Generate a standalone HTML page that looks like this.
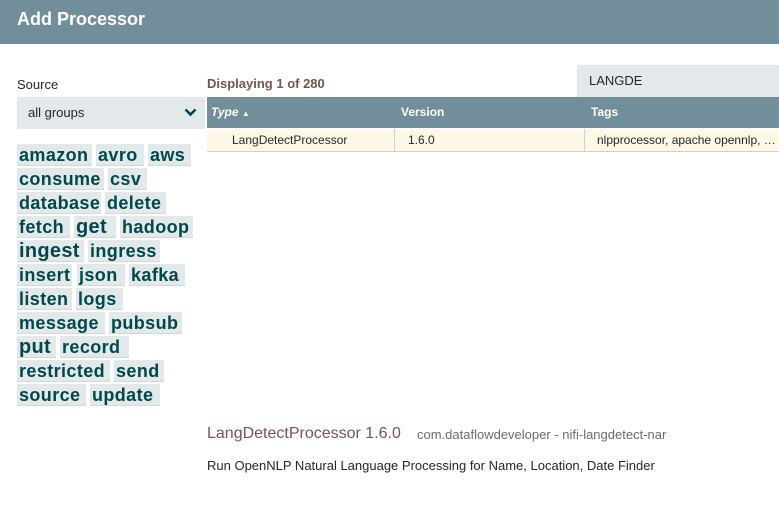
<!DOCTYPE html>
<html><head><style>
*{margin:0;padding:0;box-sizing:border-box}
body{width:779px;height:508px;background:#fff;font-family:"Liberation Sans",sans-serif;position:relative;overflow:hidden}
.a{position:absolute;white-space:nowrap}
.hdr{left:0;top:0;width:779px;height:44px;background:#728e9b;color:#fff;font-weight:bold;font-size:18px;padding:9px 0 0 17px}
.t{position:absolute;background:#e3e8eb;color:#004849;font-weight:bold;font-size:18px;height:22px;line-height:22px;padding:0 0 0 2px;letter-spacing:0.4px;border-bottom:1px solid #d2d9dc;overflow:hidden}
.b{font-size:20px;letter-spacing:0.3px}
.th{background:#728e9b;color:#fff;font-weight:bold;font-size:12px;height:31px;line-height:31px;top:97px}
.td{background:#fff8e6;font-size:12px;color:#262626;height:23px;line-height:22px;top:129px;border-bottom:1px solid #c7d2d7}
</style></head><body>
<div class="a hdr">Add Processor</div>
<div class="a" style="left:17px;top:77px;font-size:13px;color:#262626">Source</div>
<div class="a" style="left:17px;top:97px;width:188px;height:32px;background:#e3e8eb;font-size:13px;color:#262626;padding:8px 0 0 11px">all groups
<svg style="position:absolute;right:8px;top:11px" width="13" height="9" viewBox="0 0 13 9"><path d="M1.5 1.5 L6.5 6.5 L11.5 1.5" stroke="#004849" stroke-width="2.6" fill="none"/></svg></div>
<div class="a" style="left:207px;top:76px;font-size:13px;font-weight:bold;color:#775351">Displaying 1 of 280</div>
<div class="a" style="left:577px;top:65px;width:202px;height:32px;background:#e3e8eb;font-size:13px;color:#262626;padding:8px 0 0 12px">LANGDE</div>
<div class="a th" style="left:207px;width:188px;padding-left:4px;font-style:italic">Type <span style="font-size:8px;font-style:normal">▲</span></div>
<div class="a th" style="left:395px;width:190px;padding-left:6px">Version</div>
<div class="a th" style="left:585px;width:194px;padding-left:6px">Tags</div>
<div class="a td" style="left:207px;width:188px;padding-left:25px;border-right:1px solid #c7d2d7">LangDetectProcessor</div>
<div class="a td" style="left:395px;width:190px;padding-left:13px;border-right:1px solid #c7d2d7">1.6.0</div>
<div class="a td" style="left:585px;width:194px;padding-left:12px">nlpprocessor, apache opennlp, …</div>

<div class="t" style="left:17px;top:144px;width:75px">amazon</div><div class="t" style="left:96px;top:144px;width:48px">avro</div><div class="t" style="left:148px;top:144px;width:43px">aws</div>
<div class="t" style="left:17px;top:168px;width:87px">consume</div><div class="t" style="left:108px;top:168px;width:39px">csv</div>
<div class="t" style="left:17px;top:192px;width:84px">database</div><div class="t" style="left:105px;top:192px;width:61px">delete</div>
<div class="t" style="left:17px;top:216px;width:53px">fetch</div><div class="t b" style="left:74px;top:216px;width:42px">get</div><div class="t" style="left:120px;top:216px;width:73px">hadoop</div>
<div class="t b" style="left:17px;top:240px;width:67px">ingest</div><div class="t" style="left:88px;top:240px;width:72px">ingress</div>
<div class="t" style="left:17px;top:264px;width:55px">insert</div><div class="t" style="left:77px;top:264px;width:48px">json</div><div class="t" style="left:129px;top:264px;width:56px">kafka</div>
<div class="t" style="left:17px;top:288px;width:55px">listen</div><div class="t" style="left:76px;top:288px;width:47px">logs</div>
<div class="t" style="left:17px;top:312px;width:88px">message</div><div class="t" style="left:109px;top:312px;width:73px">pubsub</div>
<div class="t b" style="left:17px;top:336px;width:39px">put</div><div class="t" style="left:60px;top:336px;width:69px">record</div>
<div class="t" style="left:17px;top:360px;width:93px">restricted</div><div class="t" style="left:114px;top:360px;width:50px">send</div>
<div class="t" style="left:17px;top:384px;width:69px">source</div><div class="t" style="left:90px;top:384px;width:70px">update</div>

<div class="a" style="left:207px;top:425px;font-size:16px;color:#775351">LangDetectProcessor 1.6.0</div>
<div class="a" style="left:417px;top:427px;font-size:13px;color:#6b6b6b">com.dataflowdeveloper - nifi-langdetect-nar</div>
<div class="a" style="left:207px;top:458px;font-size:13px;color:#262626">Run OpenNLP Natural Language Processing for Name, Location, Date Finder</div>
</body></html>
